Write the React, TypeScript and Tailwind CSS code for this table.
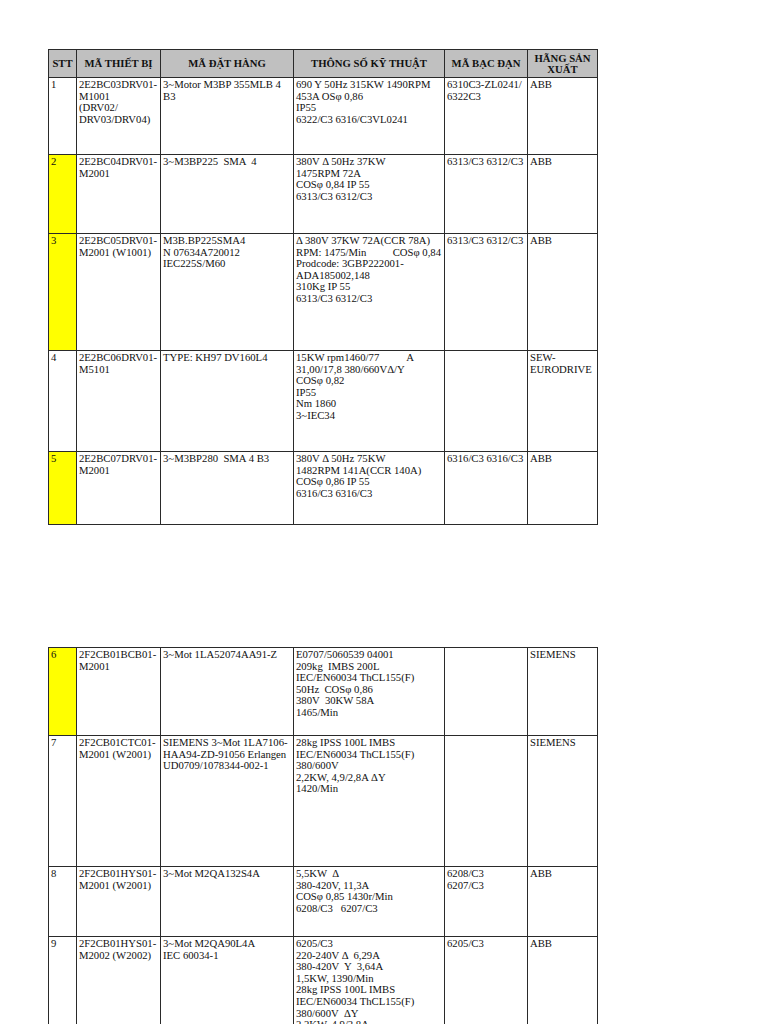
import React from "react";

type Row = {
  stt: string;
  yellow?: boolean;
  h: number;
  ma: React.ReactNode;
  dat: React.ReactNode;
  spec: React.ReactNode;
  bac: React.ReactNode;
  hang: React.ReactNode;
};

const L = ({ children }: { children: React.ReactNode }) => (
  <div className="whitespace-pre">{children}</div>
);

const rows1: Row[] = [
  {
    stt: "1",
    h: 77,
    ma: (
      <>
        <L>2E2BC03DRV01-</L>
        <L>M1001</L>
        <L>(DRV02/</L>
        <L>DRV03/DRV04)</L>
      </>
    ),
    dat: (
      <>
        <L>3~Motor M3BP 355MLB 4</L>
        <L>B3</L>
      </>
    ),
    spec: (
      <>
        <L>690 Y 50Hz 315KW 1490RPM</L>
        <L>453A OSφ 0,86</L>
        <L>IP55</L>
        <L>6322/C3 6316/C3VL0241</L>
      </>
    ),
    bac: (
      <>
        <L>6310C3-ZL0241/</L>
        <L>6322C3</L>
      </>
    ),
    hang: <L>ABB</L>,
  },
  {
    stt: "2",
    yellow: true,
    h: 79,
    ma: (
      <>
        <L>2E2BC04DRV01-</L>
        <L>M2001</L>
      </>
    ),
    dat: <L>3~M3BP225  SMA  4</L>,
    spec: (
      <>
        <L>380V Δ 50Hz 37KW</L>
        <L>1475RPM 72A</L>
        <L>COSφ 0,84 IP 55</L>
        <L>6313/C3 6312/C3</L>
      </>
    ),
    bac: <L>6313/C3 6312/C3</L>,
    hang: <L>ABB</L>,
  },
  {
    stt: "3",
    yellow: true,
    h: 117,
    ma: (
      <>
        <L>2E2BC05DRV01-</L>
        <L>M2001 (W1001)</L>
      </>
    ),
    dat: (
      <>
        <L>M3B.BP225SMA4</L>
        <L>N 07634A720012</L>
        <L>IEC225S/M60</L>
      </>
    ),
    spec: (
      <>
        <L>Δ 380V 37KW 72A(CCR 78A)</L>
        <div className="flex justify-between pr-[1px]">
          <span>RPM: 1475/Min</span>
          <span>COSφ 0,84</span>
        </div>
        <L>Prodcode: 3GBP222001-</L>
        <L>ADA185002,148</L>
        <L>310Kg IP 55</L>
        <L>6313/C3 6312/C3</L>
      </>
    ),
    bac: <L>6313/C3 6312/C3</L>,
    hang: <L>ABB</L>,
  },
  {
    stt: "4",
    h: 101,
    ma: (
      <>
        <L>2E2BC06DRV01-</L>
        <L>M5101</L>
      </>
    ),
    dat: <L>TYPE: KH97 DV160L4</L>,
    spec: (
      <>
        <div className="whitespace-pre">
          15KW rpm1460/77<span className="ml-[27px]">A</span>
        </div>
        <L>31,00/17,8 380/660VΔ/Y</L>
        <L>COSφ 0,82</L>
        <L>IP55</L>
        <L>Nm 1860</L>
        <L>3~IEC34</L>
      </>
    ),
    bac: null,
    hang: (
      <>
        <L>SEW-</L>
        <L>EURODRIVE</L>
      </>
    ),
  },
  {
    stt: "5",
    yellow: true,
    h: 73,
    ma: (
      <>
        <L>2E2BC07DRV01-</L>
        <L>M2001</L>
      </>
    ),
    dat: <L>3~M3BP280  SMA 4 B3</L>,
    spec: (
      <>
        <L>380V Δ 50Hz 75KW</L>
        <L>1482RPM 141A(CCR 140A)</L>
        <L>COSφ 0,86 IP 55</L>
        <L>6316/C3 6316/C3</L>
      </>
    ),
    bac: <L>6316/C3 6316/C3</L>,
    hang: <L>ABB</L>,
  },
];

const rows2: Row[] = [
  {
    stt: "6",
    yellow: true,
    h: 88,
    ma: (
      <>
        <L>2F2CB01BCB01-</L>
        <L>M2001</L>
      </>
    ),
    dat: <L>3~Mot 1LA52074AA91-Z</L>,
    spec: (
      <>
        <L>E0707/5060539 04001</L>
        <L>209kg  IMBS 200L</L>
        <L>IEC/EN60034 ThCL155(F)</L>
        <L>50Hz  COSφ 0,86</L>
        <L>380V  30KW 58A</L>
        <L>1465/Min</L>
      </>
    ),
    bac: null,
    hang: <L>SIEMENS</L>,
  },
  {
    stt: "7",
    h: 131,
    ma: (
      <>
        <L>2F2CB01CTC01-</L>
        <L>M2001 (W2001)</L>
      </>
    ),
    dat: (
      <>
        <L>SIEMENS 3~Mot 1LA7106-</L>
        <L>HAA94-ZD-91056 Erlangen</L>
        <L>UD0709/1078344-002-1</L>
      </>
    ),
    spec: (
      <>
        <L>28kg IPSS 100L IMBS</L>
        <L>IEC/EN60034 ThCL155(F)</L>
        <L>380/600V</L>
        <L>2,2KW, 4,9/2,8A ΔY</L>
        <L>1420/Min</L>
      </>
    ),
    bac: null,
    hang: <L>SIEMENS</L>,
  },
  {
    stt: "8",
    h: 70,
    ma: (
      <>
        <L>2F2CB01HYS01-</L>
        <L>M2001 (W2001)</L>
      </>
    ),
    dat: <L>3~Mot M2QA132S4A</L>,
    spec: (
      <>
        <L>5,5KW  Δ</L>
        <L>380-420V, 11,3A</L>
        <L>COSφ 0,85 1430r/Min</L>
        <L>6208/C3   6207/C3</L>
      </>
    ),
    bac: (
      <>
        <L>6208/C3</L>
        <L>6207/C3</L>
      </>
    ),
    hang: <L>ABB</L>,
  },
  {
    stt: "9",
    h: 130,
    ma: (
      <>
        <L>2F2CB01HYS01-</L>
        <L>M2002 (W2002)</L>
      </>
    ),
    dat: (
      <>
        <L>3~Mot M2QA90L4A</L>
        <L>IEC 60034-1</L>
      </>
    ),
    spec: (
      <>
        <L>6205/C3</L>
        <L>220-240V Δ  6,29A</L>
        <L>380-420V  Y  3,64A</L>
        <L>1,5KW, 1390/Min</L>
        <L>28kg IPSS 100L IMBS</L>
        <L>IEC/EN60034 ThCL155(F)</L>
        <L>380/600V  ΔY</L>
        <L>2,2KW, 4,9/2,8A</L>
      </>
    ),
    bac: <L>6205/C3</L>,
    hang: <L>ABB</L>,
  },
];

const cell =
  "border border-[#2a2a2a] align-top px-[2px] pt-[1px] text-left font-normal overflow-hidden";

function Cols() {
  return (
    <colgroup>
      <col className="w-[28px]" />
      <col className="w-[84px]" />
      <col className="w-[133px]" />
      <col className="w-[151px]" />
      <col className="w-[83px]" />
      <col className="w-[70px]" />
    </colgroup>
  );
}

function Body({ rows }: { rows: Row[] }) {
  return (
    <tbody>
      {rows.map((r) => (
        <tr key={r.stt} style={{ height: r.h }}>
          <td className={`${cell} ${r.yellow ? "bg-[#ffff00]" : ""}`}>{r.stt}</td>
          <td className={cell}>{r.ma}</td>
          <td className={cell}>{r.dat}</td>
          <td className={cell}>{r.spec}</td>
          <td className={cell}>{r.bac}</td>
          <td className={cell}>{r.hang}</td>
        </tr>
      ))}
    </tbody>
  );
}

const th =
  "border border-[#2a2a2a] bg-[#c0c0c0] font-bold text-center align-middle px-[1px]";

export default function App() {
  return (
    <div
      className="min-h-[1024px] bg-white pt-[49px] pl-[48px] text-[#111] text-[10.7px] leading-[11.6px]"
      style={{ fontFamily: '"Liberation Serif", "Times New Roman", serif' }}
    >
      <table className="table-fixed border-collapse w-[549px]">
        <Cols />
        <thead>
          <tr className="h-[28px]">
            <th className={th}>STT</th>
            <th className={th}>MÃ THIẾT BỊ</th>
            <th className={th}>MÃ ĐẶT HÀNG</th>
            <th className={th}>THÔNG SỐ KỸ THUẬT</th>
            <th className={th}>MÃ BẠC ĐẠN</th>
            <th className={`${th} leading-[11px]`}>
              HÃNG SẢN
              <br />
              XUẤT
            </th>
          </tr>
        </thead>
        <Body rows={rows1} />
      </table>

      <table className="table-fixed border-collapse w-[549px] mt-[122px]">
        <Cols />
        <Body rows={rows2} />
      </table>
    </div>
  );
}
